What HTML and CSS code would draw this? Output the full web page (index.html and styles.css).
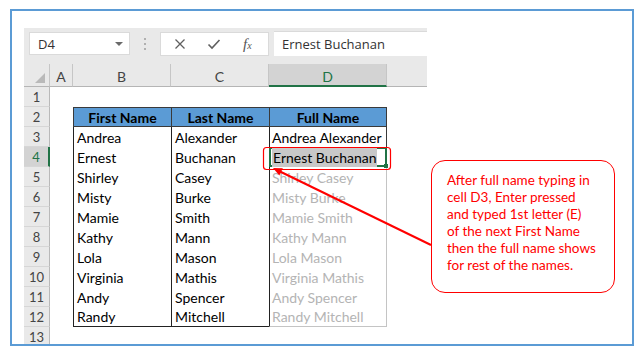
FILE: index.html
```html
<!DOCTYPE html>
<html lang="en">
<head>
  <meta charset="UTF-8" />
  <title>Flash Fill - Full Name</title>
  <link rel="stylesheet" href="styles.css">
</head>
<body>
  <div class="frame">
    <div class="excel">
      <!-- Formula bar -->
      <div class="formula-bar">
        <div class="name-box"><span>D4</span><i class="caret"></i></div>
        <div class="grip"></div>
        <div class="fx-box">
          <svg class="ic" width="12" height="12" viewBox="0 0 12 12"><path d="M1.5 1.5 L10.5 10.5 M10.5 1.5 L1.5 10.5" stroke="#5f5f5f" stroke-width="1.3" fill="none"/></svg>
          <svg class="ic" width="14" height="12" viewBox="0 0 14 12"><path d="M1.5 6.5 L5 10 L12.5 2" stroke="#5f5f5f" stroke-width="1.6" fill="none"/></svg>
          <span class="fx">f<small>x</small></span>
        </div>
        <div class="formula-input">Ernest Buchanan</div>
      </div>

      <!-- Sheet grid -->
      <div class="sheet">
        <div class="corner"><i class="tri"></i></div>
        <div class="ch">A</div>
        <div class="ch">B</div>
        <div class="ch">C</div>
        <div class="ch ch-sel">D</div>
        <div class="ch ch-rest"></div>

        <div class="rh">1</div><div></div><div></div><div></div><div></div><div></div>

        <div class="rh">2</div><div></div>
        <div class="th">First Name</div><div class="th">Last Name</div><div class="th th-last">Full Name</div><div></div>

        <div class="rh">3</div><div></div>
        <div class="td">Andrea</div><div class="td">Alexander</div><div class="td d d-dark">Andrea Alexander</div><div></div>

        <div class="rh rh-sel">4</div><div></div>
        <div class="td">Ernest</div><div class="td">Buchanan</div><div class="td d sel"><span class="hl">Ernest Buchanan</span></div><div></div>

        <div class="rh">5</div><div></div>
        <div class="td">Shirley</div><div class="td">Casey</div><div class="td d ghost">Shirley Casey</div><div></div>

        <div class="rh">6</div><div></div>
        <div class="td">Misty</div><div class="td">Burke</div><div class="td d ghost">Misty Burke</div><div></div>

        <div class="rh">7</div><div></div>
        <div class="td">Mamie</div><div class="td">Smith</div><div class="td d ghost">Mamie Smith</div><div></div>

        <div class="rh">8</div><div></div>
        <div class="td">Kathy</div><div class="td">Mann</div><div class="td d ghost">Kathy Mann</div><div></div>

        <div class="rh">9</div><div></div>
        <div class="td">Lola</div><div class="td">Mason</div><div class="td d ghost">Lola Mason</div><div></div>

        <div class="rh">10</div><div></div>
        <div class="td">Virginia</div><div class="td">Mathis</div><div class="td d ghost">Virginia Mathis</div><div></div>

        <div class="rh">11</div><div></div>
        <div class="td">Andy</div><div class="td">Spencer</div><div class="td d ghost">Andy Spencer</div><div></div>

        <div class="rh">12</div><div></div>
        <div class="td last">Randy</div><div class="td last">Mitchell</div><div class="td d ghost last">Randy Mitchell</div><div></div>

        <div class="rh">13</div><div></div><div></div><div></div><div></div><div></div>
      </div>
    </div>

    <!-- Annotation: box round D4 and the arrow -->
    <svg class="marks" width="620" height="333" viewBox="0 0 620 333">
      <rect x="251.5" y="136.5" width="127" height="22" rx="3" fill="none" stroke="#ff0000" stroke-width="1.2"/>
      <line x1="419" y1="234" x2="268" y2="160.5" stroke="#ff0000" stroke-width="2"/>
      <polygon points="261,157 270.9,157.3 267.3,164.5" fill="#ff0000"/>
    </svg>

    <div class="callout">
      After full name typing in<br>
      cell D3, Enter pressed<br>
      and typed 1st letter (E)<br>
      of the next First Name<br>
      then the full name shows<br>
      for rest of the names.
    </div>
  </div>
</body>
</html>
```

FILE: styles.css
```css
* {
  box-sizing: border-box;
  margin: 0;
  padding: 0;
}
body {
  background: #fff;
  font-family: Lato, "Open Sans", sans-serif;
}

/* Outer blue frame */
.frame {
  position: relative;
  margin: 9px 0 0 10px;
  width: 624px;
  height: 337px;
  border: 2px solid #5b9bd5;
  padding: 17px 0 0 12px;
  background: #fff;
}
.excel {
  width: 403px;
  height: 316px;
  overflow: hidden;
}

/* Formula bar */
.formula-bar {
  display: flex;
  align-items: flex-start;
  height: 36px;
  padding-top: 4px;
  background: #e9e9e9;
  font-family: "Open Sans", sans-serif;
  font-size: 13px;
  color: #333;
}
.name-box {
  display: flex;
  align-items: center;
  justify-content: space-between;
  margin-left: 5px;
  width: 101px;
  height: 23px;
  padding: 0 6px 0 8px;
  background: #fff;
  border: 1px solid #dadada;
}
.caret {
  width: 0;
  height: 0;
  border-left: 4px solid transparent;
  border-right: 4px solid transparent;
  border-top: 4px solid #6a6a6a;
}
.grip {
  margin: 6px 0 0 14px;
  width: 2px;
  height: 12px;
  background: repeating-linear-gradient(#b0b0b0 0 2px, transparent 2px 5px);
}
.fx-box {
  display: flex;
  align-items: center;
  margin-left: 14px;
  width: 109px;
  height: 24px;
  padding-left: 13px;
  gap: 21px;
  background: #fff;
  border: 1px solid #dadada;
}
.fx {
  font-family: "Liberation Serif", serif;
  font-style: italic;
  font-size: 15px;
  color: #555;
  margin-left: 1px;
}
.fx small {
  font-size: 10px;
}
.formula-input {
  flex: 1;
  margin: -1px 0 0 5px;
  height: 25px;
  padding: 3px 0 0 8px;
  background: #fff;
  border-top: 1px solid #dadada;
  font-size: 13px;
  color: #333;
}

/* Sheet grid */
.sheet {
  display: grid;
  grid-template-columns: 26px 23px 98px 98px 118px 40px;
  grid-template-rows: 23px repeat(13, 20px);
  font-size: 14px;
  color: #000;
}
.corner {
  display: flex;
  align-items: flex-end;
  justify-content: flex-end;
  padding: 0 4px 3px 0;
  background: #e9e9e9;
  border-right: 1px solid #c6c6c6;
  border-bottom: 1px solid #b5b5b5;
}
.tri {
  width: 0;
  height: 0;
  border-left: 10px solid transparent;
  border-bottom: 10px solid #b9b9b9;
}
.ch {
  display: flex;
  align-items: center;
  justify-content: center;
  padding-top: 3px;
  background: #e9e9e9;
  border-right: 1px solid #c6c6c6;
  border-bottom: 1px solid #b5b5b5;
  color: #444;
  font-size: 14px;
}
.ch-sel {
  background: #d3d3d3;
  color: #217346;
  border-bottom: 2px solid #217346;
}
.ch-rest {
  border-right: none;
}
.rh {
  display: flex;
  align-items: center;
  justify-content: center;
  background: #e9e9e9;
  border-right: 1px solid #b9b9b9;
  border-bottom: 1px solid #d6d6d6;
  color: #444;
  font-size: 13px;
}
.rh-sel {
  background: #d3d3d3;
  color: #217346;
  border-right: 2px solid #217346;
}

/* Table */
.th {
  display: flex;
  align-items: center;
  justify-content: center;
  background: #5b9bd5;
  font-weight: bold;
  border: 1px solid #3a3a3a;
  border-right: none;
}
.th-last {
  border-right: 1px solid #3a3a3a;
}
.td {
  display: flex;
  align-items: center;
  padding-left: 3px;
  border-left: 1px solid #222;
  white-space: nowrap;
}
.td.d {
  padding-left: 2px;
  border-right: 1px solid #c4c4c4;
}
.td.d-dark {
  border-right-color: #3a3a3a;
}
.td.last {
  border-bottom: 1px solid #222;
}
.td.d.last {
  border-bottom-color: #c4c4c4;
}
.ghost {
  color: #b4b4b4;
}
.sel {
  position: relative;
  border: 2px solid #217346 !important;
  padding-left: 1px !important;
}
.sel::after {
  content: "";
  position: absolute;
  right: -3px;
  bottom: -3px;
  width: 4px;
  height: 4px;
  background: #217346;
}
.hl {
  background: #c8c8c8;
  padding: 1px 0 1px 1px;
}

/* Annotation */
.marks {
  position: absolute;
  left: 0;
  top: 0;
  pointer-events: none;
}
.callout {
  position: absolute;
  left: 419px;
  top: 149px;
  width: 184px;
  height: 133px;
  padding: 11px 0 0 15px;
  background: #fff;
  border: 1.5px solid #ff0000;
  border-radius: 14px;
  color: #ff0000;
  font-size: 13.5px;
  line-height: 17px;
}
```
